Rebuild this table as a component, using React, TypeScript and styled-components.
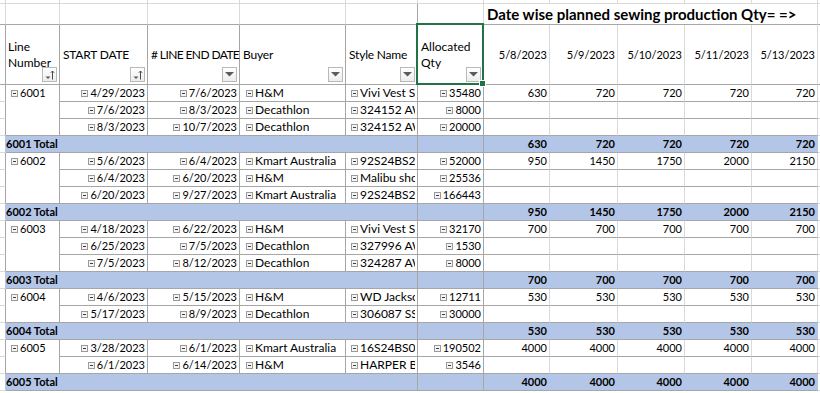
import React from 'react';
import styled, { createGlobalStyle } from 'styled-components';

const DARK = '#a6a6a6';
const LIGHT = '#d9d9d9';
const BLUE = '#b4c6e7';
const GREEN = '#217346';

const GlobalStyle = createGlobalStyle`
  html, body {
    margin: 0;
    padding: 0;
    background: #fff;
    overflow: hidden;
  }
  body {
    font-family: Lato, 'Open Sans', sans-serif;
    font-size: 12px;
    color: #000;
  }
`;

const Sheet = styled.div`
  display: grid;
  grid-template-columns: 6px 54px 88px 92px 106px 72px 66px 66px 68px 67px 67px 66px 1fr;
  grid-template-rows: 4px 21px 60px repeat(18, 17px);
  width: 820px;
  height: 393px;
  overflow: hidden;
`;

type CellProps = {
  $r?: string;
  $b?: string;
  $bg?: string;
  $align?: 'left' | 'right';
  $bold?: boolean;
  $num?: boolean;
  $span?: number;
  $rows?: number;
  $pl?: number;
  $top?: boolean;
};

const Cell = styled.div<CellProps>`
  box-sizing: border-box;
  min-width: 0;
  border-right: 1px solid ${(p) => p.$r ?? LIGHT};
  border-bottom: 1px solid ${(p) => p.$b ?? LIGHT};
  background: ${(p) => p.$bg ?? 'transparent'};
  display: flex;
  align-items: ${(p) => (p.$top ? 'flex-start' : 'center')};
  justify-content: ${(p) => (p.$align === 'right' ? 'flex-end' : 'flex-start')};
  gap: 2px;
  padding: 0 2px 0 ${(p) => p.$pl ?? 3}px;
  line-height: 16px;
  font-size: ${(p) => (p.$num ? 11 : 12)}px;
  font-weight: ${(p) => (p.$bold ? 700 : 400)};
  white-space: nowrap;
  overflow: hidden;
  grid-column: span ${(p) => p.$span ?? 1};
  grid-row: span ${(p) => p.$rows ?? 1};
`;

const HeaderCell = styled(Cell)<{ $wrap?: boolean; $tight?: boolean }>`
  position: relative;
  overflow: visible;
  white-space: ${(p) => (p.$wrap ? 'normal' : 'nowrap')};
  letter-spacing: ${(p) => (p.$tight ? -0.6 : p.$wrap ? 0 : -0.2)}px;
`;

const Title = styled(Cell)`
  overflow: visible;
  font-size: 15px;
  font-weight: 700;
  padding-left: 3px;
`;

const Selection = styled.span`
  position: absolute;
  top: -2px;
  left: -2px;
  right: -1px;
  bottom: -1px;
  border: 2px solid ${GREEN};
  z-index: 2;
  pointer-events: none;
`;

const FillHandle = styled.span`
  position: absolute;
  right: -4px;
  bottom: -4px;
  width: 5px;
  height: 5px;
  background: ${GREEN};
  border: 1px solid #fff;
`;

const FilterButton = styled.span`
  position: absolute;
  right: 2px;
  bottom: 2px;
  width: 15px;
  height: 15px;
  box-sizing: border-box;
  border: 1px solid #b9b9b9;
  background: linear-gradient(#ffffff, #ededed);
  display: flex;
  align-items: center;
  justify-content: center;
  z-index: 1;
`;

const ItemLine = styled.span`
  display: flex;
  align-items: center;
  gap: 2px;
  height: 16px;
  min-width: 0;
`;

const Collapse = styled.span`
  position: relative;
  flex: none;
  width: 7px;
  height: 7px;
  box-sizing: border-box;
  border: 1px solid #9a9a9a;
  background: #f4f4f4;
  &::after {
    content: '';
    position: absolute;
    left: 1px;
    top: 2px;
    width: 3px;
    height: 1px;
    background: #3c3c3c;
  }
`;

const Clip = styled.span`
  overflow: hidden;
  min-width: 0;
`;

const DropGlyph = () => (
  <svg width="9" height="5" viewBox="0 0 9 5">
    <polygon points="0,0 9,0 4.5,4.5" fill="#5b5b5b" />
  </svg>
);

const SortGlyph = () => (
  <svg width="13" height="13" viewBox="0 0 13 13">
    <path d="M2.5 8.5 h5 l-2.5 2.5z" fill="#5b5b5b" />
    <path d="M9.5 11.5 V3 M7.8 4.8 L9.5 3 L11.2 4.8" stroke="#4a4a4a" strokeWidth="1" fill="none" />
  </svg>
);

type Entry = {
  start: string;
  end: string;
  buyer: string;
  style: string;
  qty: string;
  plan?: number[];
};

type Group = { line: string; rows: Entry[]; total: number[] };

const dates = ['5/8/2023', '5/9/2023', '5/10/2023', '5/11/2023', '5/13/2023'];

const groups: Group[] = [
  {
    line: '6001',
    rows: [
      { start: '4/29/2023', end: '7/6/2023', buyer: 'H&M', style: 'Vivi Vest Set', qty: '35480', plan: [630, 720, 720, 720, 720] },
      { start: '7/6/2023', end: '8/3/2023', buyer: 'Decathlon', style: '324152 AW23', qty: '8000' },
      { start: '8/3/2023', end: '10/7/2023', buyer: 'Decathlon', style: '324152 AW23', qty: '20000' },
    ],
    total: [630, 720, 720, 720, 720],
  },
  {
    line: '6002',
    rows: [
      { start: '5/6/2023', end: '6/4/2023', buyer: 'Kmart Australia', style: '92S24BS219', qty: '52000', plan: [950, 1450, 1750, 2000, 2150] },
      { start: '6/4/2023', end: '6/20/2023', buyer: 'H&M', style: 'Malibu shorts', qty: '25536' },
      { start: '6/20/2023', end: '9/27/2023', buyer: 'Kmart Australia', style: '92S24BS219', qty: '166443' },
    ],
    total: [950, 1450, 1750, 2000, 2150],
  },
  {
    line: '6003',
    rows: [
      { start: '4/18/2023', end: '6/22/2023', buyer: 'H&M', style: 'Vivi Vest Set', qty: '32170', plan: [700, 700, 700, 700, 700] },
      { start: '6/25/2023', end: '7/5/2023', buyer: 'Decathlon', style: '327996 AW23', qty: '1530' },
      { start: '7/5/2023', end: '8/12/2023', buyer: 'Decathlon', style: '324287 AW23', qty: '8000' },
    ],
    total: [700, 700, 700, 700, 700],
  },
  {
    line: '6004',
    rows: [
      { start: '4/6/2023', end: '5/15/2023', buyer: 'H&M', style: 'WD Jackson', qty: '12711', plan: [530, 530, 530, 530, 530] },
      { start: '5/17/2023', end: '8/9/2023', buyer: 'Decathlon', style: '306087 SS24', qty: '30000' },
    ],
    total: [530, 530, 530, 530, 530],
  },
  {
    line: '6005',
    rows: [
      { start: '3/28/2023', end: '6/1/2023', buyer: 'Kmart Australia', style: '16S24BS001', qty: '190502', plan: [4000, 4000, 4000, 4000, 4000] },
      { start: '6/1/2023', end: '6/14/2023', buyer: 'H&M', style: 'HARPER Basic', qty: '3546' },
    ],
    total: [4000, 4000, 4000, 4000, 4000],
  },
];

const headers: { label: string; sort?: boolean; wrap?: boolean; tight?: boolean }[] = [
  { label: 'Line Number', sort: true, wrap: true },
  { label: 'START DATE', sort: true },
  { label: '# LINE END DATE', tight: true },
  { label: 'Buyer' },
  { label: 'Style Name' },
  { label: 'Allocated Qty', wrap: true },
];

const Item = ({ text, clip }: { text: string; clip?: boolean }) => (
  <ItemLine>
    <Collapse />
    {clip ? <Clip>{text}</Clip> : <span>{text}</span>}
  </ItemLine>
);

const GroupRows = ({ group }: { group: Group }) => (
  <>
    {group.rows.map((row, i) => (
      <React.Fragment key={i}>
        <Cell $r={DARK} $b={LIGHT} />
        {i === 0 && (
          <Cell $r={DARK} $b={DARK} $rows={group.rows.length} $top $pl={5} $num>
            <Item text={group.line} />
          </Cell>
        )}
        <Cell $r={DARK} $b={DARK} $align="right" $num>
          <Item text={row.start} />
        </Cell>
        <Cell $r={DARK} $b={DARK} $align="right" $num>
          <Item text={row.end} />
        </Cell>
        <Cell $r={DARK} $b={DARK} $pl={6}>
          <Item text={row.buyer} />
        </Cell>
        <Cell $r={DARK} $b={DARK} $pl={5}>
          <Item text={row.style} clip />
        </Cell>
        <Cell $r={DARK} $b={DARK} $align="right" $num>
          <Item text={row.qty} />
        </Cell>
        {dates.map((d, k) => (
          <Cell key={d} $b={DARK} $align="right" $num>
            {row.plan ? row.plan[k] : ''}
          </Cell>
        ))}
        <Cell $r="transparent" />
      </React.Fragment>
    ))}
    <Cell $r={BLUE} $b={LIGHT} />
    <Cell $span={5} $bg={BLUE} $r={DARK} $b={DARK} $bold $num $pl={0}>
      {group.line} Total
    </Cell>
    <Cell $bg={BLUE} $r={DARK} $b={DARK} />
    {group.total.map((v, k) => (
      <Cell key={k} $bg={BLUE} $r={BLUE} $b={DARK} $align="right" $bold $num>
        {v}
      </Cell>
    ))}
    <Cell $r="transparent" />
  </>
);

export default function App() {
  return (
    <>
      <GlobalStyle />
      <Sheet>
        {Array.from({ length: 13 }).map((_, i) => (
          <Cell key={`top${i}`} $r={i === 12 ? 'transparent' : LIGHT} />
        ))}

        <Cell $r={LIGHT} $b={DARK} />
        {[0, 1, 2, 3, 4].map((i) => (
          <Cell key={`r1${i}`} $r={i === 4 ? DARK : LIGHT} $b={DARK} />
        ))}
        <Cell $r={LIGHT} $b={DARK} />
        <Title $span={5} $b={DARK}>
          Date wise planned sewing production Qty= =&gt;
        </Title>
        <Cell $r="transparent" $b={DARK} />

        <Cell $r={DARK} $b={DARK} />
        {headers.map((h, i) => (
          <HeaderCell
            key={h.label}
            $r={DARK}
            $b={DARK}
            $pl={i === 0 ? 2 : 3}
            $wrap={h.wrap}
            $tight={h.tight}
          >
            {h.label}
            <FilterButton>{h.sort ? <SortGlyph /> : <DropGlyph />}</FilterButton>
            {i === 5 && (
              <Selection>
                <FillHandle />
              </Selection>
            )}
          </HeaderCell>
        ))}
        {dates.map((d) => (
          <Cell key={d} $b={DARK} $align="right" $num>
            {d}
          </Cell>
        ))}
        <Cell $r="transparent" $b={DARK} />

        {groups.map((g) => (
          <GroupRows key={g.line} group={g} />
        ))}
      </Sheet>
    </>
  );
}
